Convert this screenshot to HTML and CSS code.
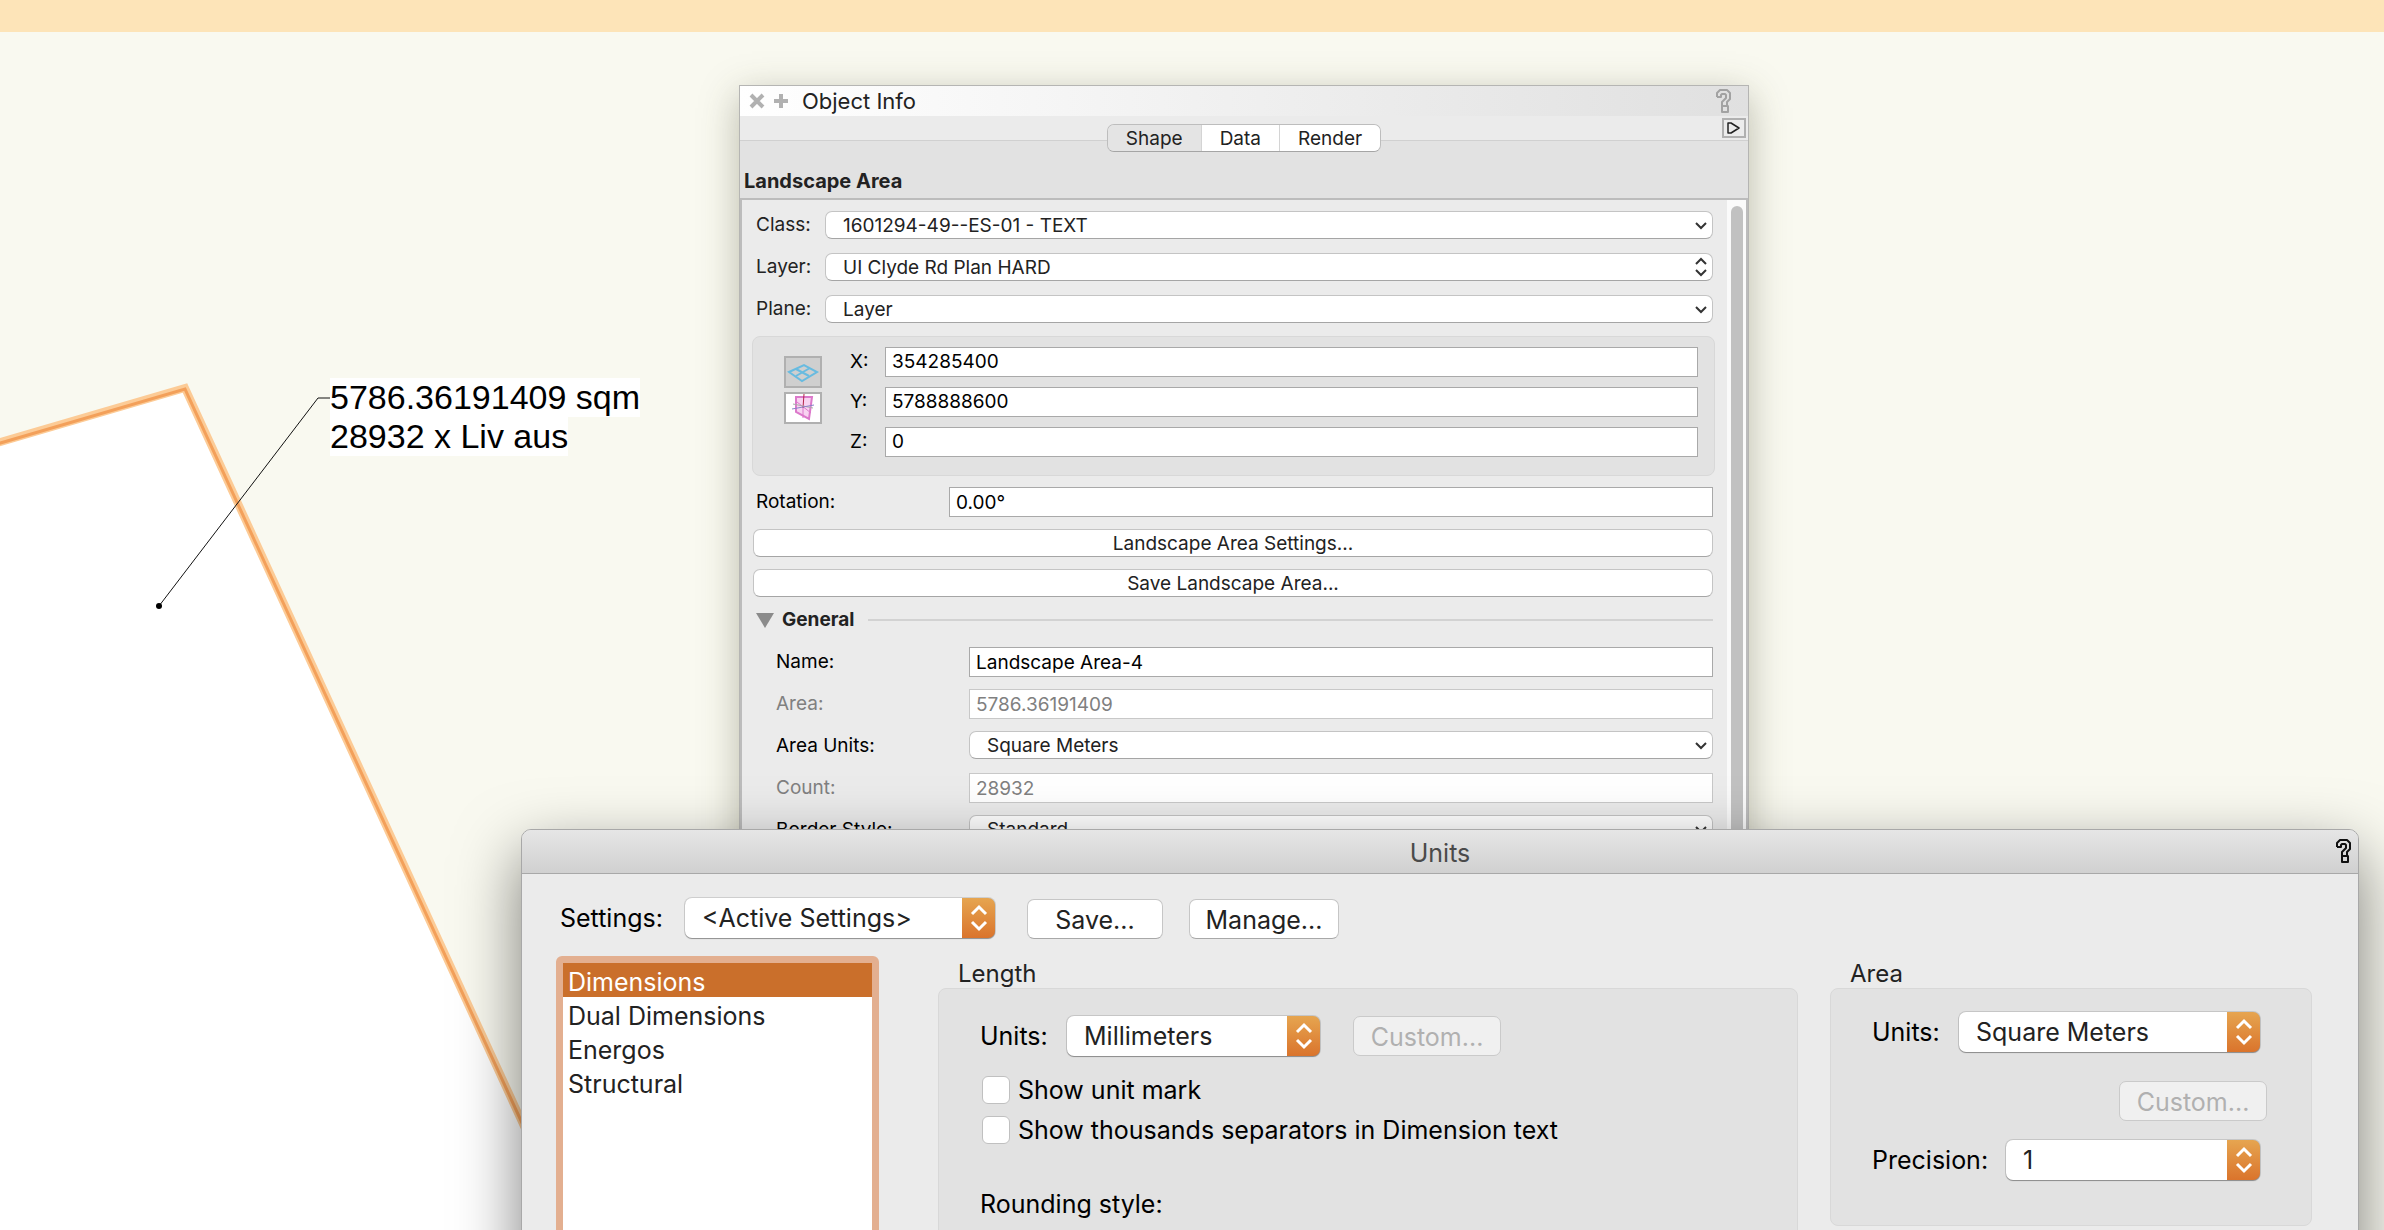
FILE: index.html
```html
<!DOCTYPE html>
<html lang="en">
<head>
    <meta charset="UTF-8">
    <meta name="viewport" content="width=device-width, initial-scale=1.0">
    <title>Landscape Area - Units</title>
    <link rel="stylesheet" href="styles.css">
</head>
<body>
    <div class="desktop">
        <div class="top-band"></div>

        <!-- Drawing area -->
        <svg class="drawing" width="640" height="1230" viewBox="0 0 640 1230" aria-hidden="true">
            <polygon points="-10,447 185,390 540,1162 540,1240 -10,1240" fill="#fff"/>
            <polyline points="-10,445 185,388 540,1161" fill="none" stroke="#fccb96" stroke-width="8"/>
            <polyline points="-10,446 185,389 540,1162" fill="none" stroke="#f3a05a" stroke-width="3"/>
            <polyline points="159,606 318,398 330,398" fill="none" stroke="#111"/>
            <circle cx="159" cy="606" r="3"/>
        </svg>
        <div class="callout">
            <div><span>5786.36191409 sqm</span></div>
            <div><span>28932 x Liv aus</span></div>
        </div>

        <!-- Object Info palette -->
        <section class="palette">
            <header class="palette-title">
                <button class="icon-button" aria-label="Close">
                    <svg width="16" height="16" viewBox="0 0 16 16"><path d="M2 2l12 12M14 2L2 14" stroke="#b1b1b1" stroke-width="4"/></svg>
                </button>
                <button class="icon-button" aria-label="Expand">
                    <svg width="16" height="16" viewBox="0 0 16 16"><path d="M8 1v14M1 8h14" stroke="#b1b1b1" stroke-width="4"/></svg>
                </button>
                <h1>Object Info</h1>
                <button class="icon-button help" aria-label="Help">
                    <svg width="16" height="24" viewBox="0 0 16 24" fill="none">
                        <path d="M1 8V4l3-3h7l3 3v6l-3 3v4h1v6H6v-6h1M1 8h4V6l1-1h3l1 1v3l-4 4v4h5" stroke="#a2a2a2" stroke-width="2" stroke-linejoin="round"/>
                    </svg>
                </button>
            </header>

            <div class="palette-head">
                <div class="tab-line">
                    <div class="tabs">
                        <button class="tab active">Shape</button>
                        <button class="tab">Data</button>
                        <button class="tab">Render</button>
                    </div>
                    <button class="menu-button" aria-label="Palette menu">
                        <svg width="14" height="12" viewBox="0 0 14 12"><path d="M1 1h3l8 5-8 5H1z" fill="none" stroke="#222" stroke-width="1.5" stroke-linejoin="round"/></svg>
                    </button>
                </div>
                <h2>Landscape Area</h2>
            </div>

            <div class="palette-body">
                <form class="props">
                    <div class="row">
                        <label for="class">Class:</label>
                        <select id="class"><option>1601294-49--ES-01 - TEXT</option></select>
                    </div>
                    <div class="row">
                        <label for="layer">Layer:</label>
                        <select id="layer" class="double"><option>UI Clyde Rd Plan HARD</option></select>
                    </div>
                    <div class="row">
                        <label for="plane">Plane:</label>
                        <select id="plane"><option>Layer</option></select>
                    </div>

                    <div class="coords">
                        <div class="plane-buttons">
                            <button type="button" class="pressed" aria-label="Layer plane">
                                <svg width="34" height="28" viewBox="0 0 34 28" fill="none" stroke="#68bbe0" stroke-width="2">
                                    <path d="M3 14L18 7l13 7-15 9z"/>
                                    <path d="M10 11l13 7M10 18l14-8"/>
                                </svg>
                            </button>
                            <button type="button" aria-label="3D plane">
                                <svg width="34" height="28" viewBox="0 0 34 28" fill="none">
                                    <path d="M10 3h16l-3 22-13-7z" fill="#f8d3f1" stroke="#dc79cb" stroke-width="2"/>
                                    <path d="M17 13V24M11 8l14 11" stroke="#dc79cb"/>
                                    <path d="M18 0l-1 14" stroke="#b32449"/>
                                    <path d="M7 10l20 4" stroke="#aaa"/>
                                    <path d="M6 15l22-4" stroke="#8a82c8"/>
                                </svg>
                            </button>
                        </div>
                        <div class="coord-fields">
                            <label for="x">X:</label>
                            <input id="x" type="text" value="354285400">
                            <label for="y">Y:</label>
                            <input id="y" type="text" value="5788888600">
                            <label for="z">Z:</label>
                            <input id="z" type="text" value="0">
                        </div>
                    </div>

                    <div class="row rotation">
                        <label for="rotation">Rotation:</label>
                        <input id="rotation" type="text" value="0.00°">
                    </div>
                    <button type="button" class="wide-button">Landscape Area Settings...</button>
                    <button type="button" class="wide-button">Save Landscape Area...</button>

                    <div class="section-head">
                        <svg width="18" height="16" viewBox="0 0 18 16"><path d="M0 1h18L9 16z" fill="#8b8b8b"/></svg>
                        <h3>General</h3>
                        <span class="rule"></span>
                    </div>

                    <div class="row general">
                        <label for="name">Name:</label>
                        <input id="name" type="text" value="Landscape Area-4">
                    </div>
                    <div class="row general dim">
                        <label for="area">Area:</label>
                        <input id="area" type="text" value="5786.36191409" disabled>
                    </div>
                    <div class="row general">
                        <label for="area-units">Area Units:</label>
                        <select id="area-units"><option>Square Meters</option></select>
                    </div>
                    <div class="row general dim">
                        <label for="count">Count:</label>
                        <input id="count" type="text" value="28932" disabled>
                    </div>
                    <div class="row general">
                        <label for="border-style">Border Style:</label>
                        <select id="border-style"><option>Standard</option></select>
                    </div>
                </form>
                <div class="scroll-track"><div class="scroll-thumb"></div></div>
            </div>
        </section>

        <!-- Units dialog -->
        <section class="dialog">
            <header class="dialog-title">
                <h1>Units</h1>
                <button class="icon-button dialog-help" aria-label="Help">
                    <svg width="16" height="24" viewBox="0 0 16 24" fill="none">
                        <path d="M1 8V4l3-3h7l3 3v6l-3 3v4h1v6H6v-6h1M1 8h4V6l1-1h3l1 1v3l-4 4v4h5" stroke="#111" stroke-width="2" stroke-linejoin="round"/>
                    </svg>
                </button>
            </header>

            <div class="settings">
                <label for="settings">Settings:</label>
                <select id="settings" class="popup"><option>&lt;Active Settings&gt;</option></select>
                <button class="push save">Save...</button>
                <button class="push manage">Manage...</button>
            </div>

            <div class="columns">
                <ul class="list" role="listbox" aria-label="Categories">
                    <li role="option" aria-selected="true" class="selected">Dimensions</li>
                    <li role="option">Dual Dimensions</li>
                    <li role="option">Energos</li>
                    <li role="option">Structural</li>
                </ul>

                <section class="group length">
                    <h2>Length</h2>
                    <div class="box">
                        <div class="field">
                            <label for="length-units">Units:</label>
                            <select id="length-units" class="popup"><option>Millimeters</option></select>
                            <button class="push custom" disabled>Custom...</button>
                        </div>
                        <label class="check"><input type="checkbox">Show unit mark</label>
                        <label class="check"><input type="checkbox">Show thousands separators in Dimension text</label>
                        <p>Rounding style:</p>
                    </div>
                </section>

                <section class="group area">
                    <h2>Area</h2>
                    <div class="box">
                        <div class="field">
                            <label for="sq-units">Units:</label>
                            <select id="sq-units" class="popup"><option>Square Meters</option></select>
                        </div>
                        <button class="push custom" disabled>Custom...</button>
                        <div class="field precision">
                            <label for="precision">Precision:</label>
                            <select id="precision" class="popup"><option>1</option></select>
                        </div>
                    </div>
                </section>
            </div>
        </section>
    </div>
</body>
</html>
```
FILE: styles.css
```css
* {
    box-sizing: border-box;
}

body {
    margin: 0;
    font-family: Inter, "Liberation Sans", sans-serif;
    color: #222;
}

h1, h2, h3, p, ul {
    margin: 0;
    padding: 0;
}

button, input, select {
    font: inherit;
    color: inherit;
    margin: 0;
}

.desktop {
    position: relative;
    height: 100vh;
    overflow: hidden;
    background: #f9f9f0;
}

.top-band {
    height: 32px;
    background: #fde4b8;
}

/* Drawing */
.drawing {
    position: absolute;
    left: 0;
    top: 0;
}

.callout {
    position: absolute;
    left: 330px;
    top: 378px;
    font: 34px/39px "Liberation Sans", Arial, sans-serif;
    color: #000;
    white-space: nowrap;
}

.callout span {
    display: inline-block;
    background: #fff;
}

.icon-button {
    display: flex;
    padding: 0;
    border: none;
    background: none;
}

/* Object Info palette */
.palette {
    position: absolute;
    left: 739px;
    right: 635px;
    top: 85px;
    border: 1px solid #b5b5b3;
    background: #ebebeb;
    font-size: 19px;
    line-height: 28px;
    box-shadow: 0 10px 36px rgba(70, 70, 40, 0.35);
}

.palette-title {
    display: flex;
    align-items: center;
    gap: 8px;
    height: 30px;
    padding: 0 16px 0 9px;
    background: linear-gradient(to right, #fff, #e0e0e0);
}

.palette-title h1 {
    padding-left: 5px;
    font-size: 22px;
    font-weight: 400;
}

.help {
    margin-left: auto;
}

.palette-head {
    height: 84px;
    border-bottom: 2px solid #bcbcbc;
    background: linear-gradient(#ebebeb 24px, #d0d0d0 24px, #d0d0d0 25px, #e2e2e2 25px);
}

.palette-head h2 {
    padding: 15px 4px 0;
    font-size: 20px;
    font-weight: 700;
}

.tab-line {
    display: flex;
    justify-content: center;
    padding-top: 8px;
    position: relative;
}

.tabs {
    display: flex;
    height: 28px;
    border: 1px solid #bdbdbd;
    border-bottom-color: #a5a5a5;
    border-radius: 7px;
    overflow: hidden;
}

.tab {
    padding: 0 18px;
    border: none;
    border-left: 1px solid #d4d4d4;
    background: #fff;
}

.tab.active {
    border-left: none;
    background: #e4e4e4;
}

.menu-button {
    position: absolute;
    right: 2px;
    top: 2px;
    display: flex;
    align-items: center;
    justify-content: center;
    width: 24px;
    height: 20px;
    padding: 0;
    border: 2px solid #b0b0b0;
    background: #ececec;
}

.palette-body {
    display: flex;
    border: solid #bcbcbc;
    border-width: 0 2px;
}

.props {
    flex: 1;
    display: flex;
    flex-direction: column;
    gap: 12px;
    padding: 11px 14px 12px 10px;
}

.row {
    display: flex;
    align-items: flex-start;
    height: 30px;
    padding-left: 4px;
}

.row label {
    width: 69px;
}

.row select,
.row input {
    flex: 1;
    min-width: 0;
}

.row.rotation label {
    width: 193px;
    line-height: 30px;
}

.row.rotation,
.row.general,
.coords {
    color: #000;
}

.row.general {
    padding-left: 24px;
}

.row.general label {
    width: 193px;
    line-height: 30px;
}

.row.dim label {
    color: #808080;
}

.palette select {
    height: 28px;
    padding: 0 28px 0 17px;
    border: 1px solid #c4c4c4;
    border-bottom-color: #a5a5a5;
    border-radius: 7px;
    appearance: none;
    color: #222;
    background: #fff url("data:image/svg+xml,%3Csvg xmlns='http://www.w3.org/2000/svg' width='12' height='20'%3E%3Cpath d='M1 8l5 5 5-5' fill='none' stroke='%23333' stroke-width='2'/%3E%3C/svg%3E") no-repeat right 5px center;
}

.palette select.double {
    background-image: url("data:image/svg+xml,%3Csvg xmlns='http://www.w3.org/2000/svg' width='12' height='20'%3E%3Cpath d='M1 7l5-5 5 5M1 13l5 5 5-5' fill='none' stroke='%23333' stroke-width='2'/%3E%3C/svg%3E");
}

.palette input {
    height: 30px;
    padding: 0 6px;
    border: 1px solid #a9a9a9;
    border-radius: 0;
    background: #fff;
    color: #000;
}

.palette input:disabled {
    border-color: #c8c8c8;
    color: #808080;
}

.coords {
    display: flex;
    margin: -1px -2px -1px 0;
    padding: 10px 16px 18px 31px;
    border: 1px solid #d8d8d8;
    border-radius: 8px;
    background: #e2e2e2;
    line-height: 30px;
}

.plane-buttons {
    display: flex;
    flex-direction: column;
    gap: 4px;
    padding-top: 9px;
}

.plane-buttons button {
    display: flex;
    width: 38px;
    height: 32px;
    padding: 0;
    border: 2px solid #b0b0b0;
    background: #fff;
}

.plane-buttons .pressed {
    background: #cfcfcf;
}

.coord-fields {
    flex: 1;
    display: grid;
    grid-template-columns: 35px 1fr;
    gap: 10px 0;
    padding-left: 28px;
}

.wide-button {
    height: 28px;
    margin-left: 1px;
    padding: 0;
    border: 1px solid #c4c4c4;
    border-bottom-color: #a5a5a5;
    border-radius: 7px;
    background: #fff;
}

.section-head {
    display: flex;
    align-items: center;
    height: 22px;
    margin-bottom: 4px;
    padding-left: 4px;
}

.section-head h3 {
    padding: 0 14px 0 8px;
    font-size: 19px;
    font-weight: 700;
}

.rule {
    flex: 1;
    height: 2px;
    background: #d2d2d2;
}

.scroll-track {
    width: 19px;
    padding: 6px 3px 0 4px;
    background: #fafafa;
}

.scroll-thumb {
    height: 100%;
    border-radius: 6px;
    background: #c1c1c1;
}

/* Units dialog */
.dialog {
    position: absolute;
    left: 521px;
    right: 25px;
    top: 829px;
    border: 1px solid #a8a8a8;
    border-radius: 10px;
    background: #ebebeb;
    font-size: 25px;
    line-height: 40px;
    box-shadow: 0 24px 64px rgba(0, 0, 0, 0.5);
}

.dialog-title {
    position: relative;
    height: 44px;
    padding-top: 3px;
    border-bottom: 1px solid #a8a8a8;
    border-radius: 9px 9px 0 0;
    background: linear-gradient(#e6e6e6, #d0d0d0);
    text-align: center;
    color: #4a4a4a;
}

.dialog-title h1 {
    font-size: 25px;
    font-weight: 400;
}

.dialog-help {
    position: absolute;
    right: 6px;
    top: 9px;
}

.dialog label,
.dialog p {
    color: #000;
}

.settings {
    display: flex;
    padding: 24px 39px 0 38px;
}

.settings label {
    width: 125px;
}

.settings select {
    width: 310px;
}

.popup {
    height: 40px;
    padding: 0 40px 0 17px;
    border: none;
    border-radius: 7px;
    appearance: none;
    color: #222;
    background: #fff url("data:image/svg+xml,%3Csvg xmlns='http://www.w3.org/2000/svg' width='33' height='40'%3E%3Cdefs%3E%3ClinearGradient id='g' x2='0' y2='1'%3E%3Cstop stop-color='%23e6a550'/%3E%3Cstop offset='1' stop-color='%23da742c'/%3E%3C/linearGradient%3E%3C/defs%3E%3Cpath fill='url(%23g)' d='M0 0h33v40H0z'/%3E%3Cpath d='M10 16l7-7 7 7M10 24l7 7 7-7' fill='none' stroke='%23fff' stroke-width='3'/%3E%3C/svg%3E") no-repeat right center;
    box-shadow: 0 0 0 1px rgba(0, 0, 0, 0.12), 0 1px 1px rgba(0, 0, 0, 0.3);
}

.push {
    height: 40px;
    padding: 0;
    border: 1px solid #c6c6c6;
    border-bottom-color: #a8a8a8;
    border-radius: 7px;
    background: #fff;
}

.push:disabled {
    border-color: #cacaca;
    background: #f0f0f0;
    color: #b0b0b0;
}

.settings .push {
    margin-top: 1px;
}

.save {
    width: 136px;
    margin-left: 32px;
}

.manage {
    width: 150px;
    margin-left: 26px;
}

.custom {
    width: 148px;
}

.columns {
    display: flex;
    align-items: flex-start;
    padding: 17px 46px 40px 34px;
}

.list {
    width: 323px;
    height: 480px;
    border: 7px solid #e3af90;
    border-radius: 6px;
    background: #fff;
    line-height: 30px;
    list-style: none;
}

.list li {
    padding: 4px 0 0 5px;
}

.list .selected {
    background: #ca6f2b;
    color: #fff;
}

.group h2 {
    height: 32px;
    padding-left: 20px;
    font-size: 24px;
    font-weight: 400;
    line-height: 36px;
}

.length {
    flex: 860;
    margin-left: 59px;
}

.area {
    flex: 482;
    margin-left: 32px;
}

.box {
    border: 1px solid #d8d8d8;
    border-radius: 8px;
    background: #e2e2e2;
}

.length .box {
    min-height: 440px;
    padding: 27px 41px;
}

.area .box {
    display: flex;
    flex-direction: column;
    padding: 23px 51px 45px 41px;
}

.field {
    display: flex;
}

.field label {
    width: 87px;
}

.length .popup {
    width: 253px;
    margin-right: 33px;
}

.area .popup {
    flex: 1;
    min-width: 0;
}

.area .custom {
    align-self: flex-end;
    margin: 29px -7px 19px 0;
}

.precision label {
    width: 134px;
}

.check {
    display: flex;
    align-items: center;
    gap: 8px;
    height: 28px;
    margin-bottom: 12px;
    padding-left: 2px;
}

.length .field {
    margin-bottom: 20px;
}

.check input {
    width: 28px;
    height: 28px;
    border: 1px solid #c0c0c0;
    border-radius: 6px;
    appearance: none;
    background: #fff;
}

.length p {
    padding-top: 28px;
}
```
